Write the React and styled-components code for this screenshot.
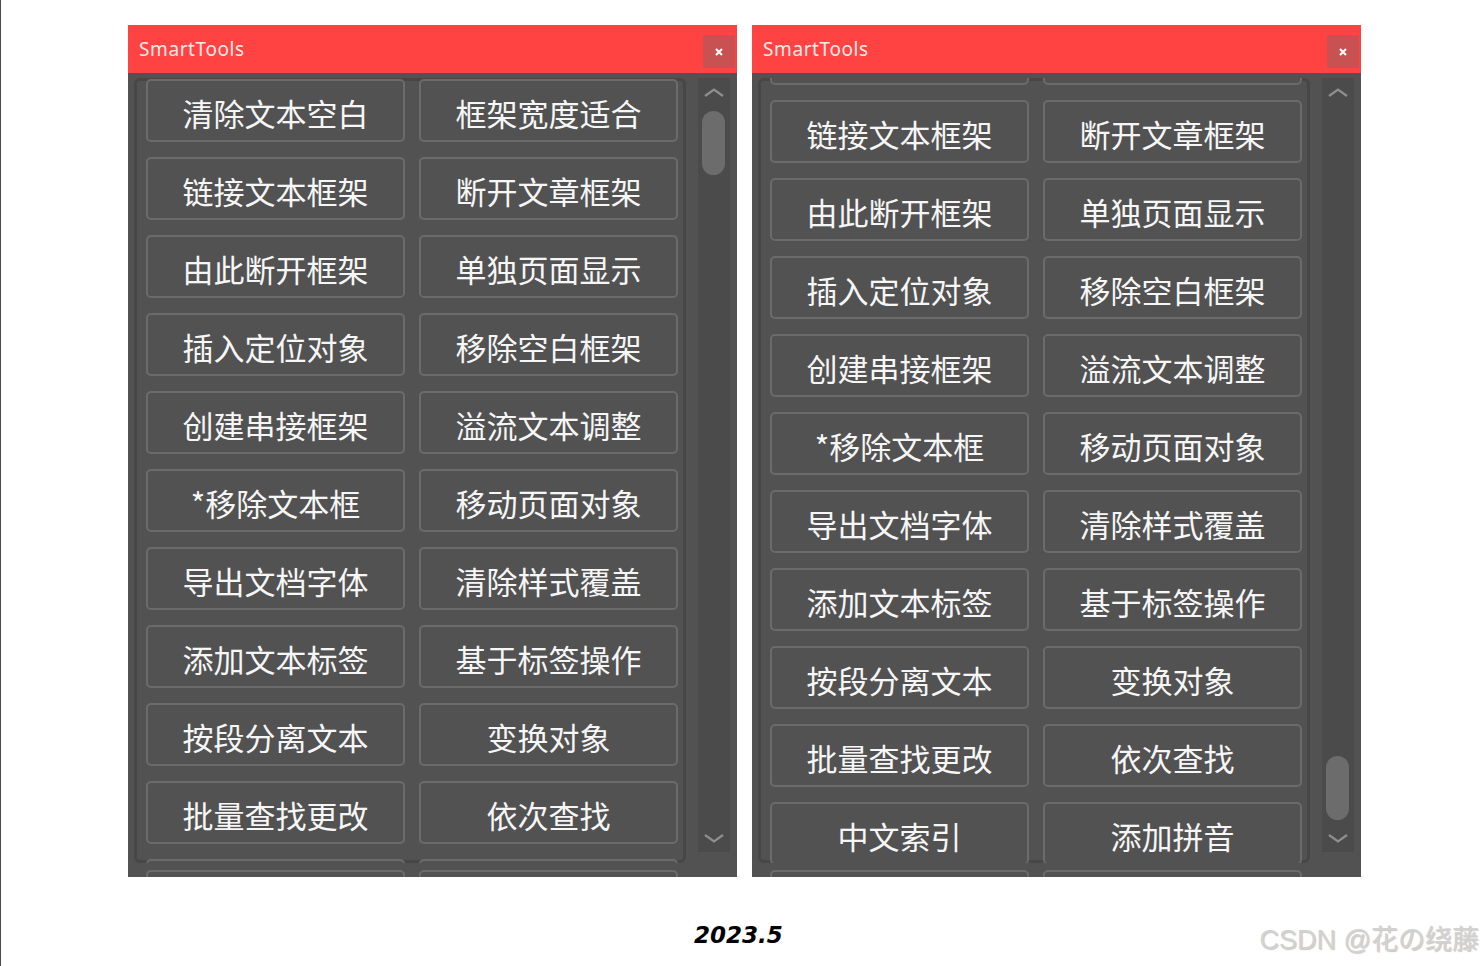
import React from 'react';
import styled, { createGlobalStyle } from 'styled-components';

const GlobalStyle = createGlobalStyle`
  html, body {
    margin: 0;
    padding: 0;
    background: #ffffff;
  }
  * {
    box-sizing: border-box;
  }
`;

const Page = styled.div`
  position: relative;
  width: 1482px;
  height: 966px;
  border-left: 1px solid #4a4a4a;
  overflow: hidden;
  font-family: 'Noto Sans', 'Noto Sans CJK SC', sans-serif;
`;

const PanelRow = styled.div`
  display: flex;
  gap: 15px;
  padding: 25px 0 0 127px;
`;

const Panel = styled.div`
  width: 609px;
  display: flex;
  flex-direction: column;
`;

const TitleBar = styled.div`
  height: 48px;
  background: #ff4343;
  display: flex;
  align-items: center;
  justify-content: space-between;
  padding-left: 11px;
`;

const Title = styled.span`
  font-family: 'Noto Sans', sans-serif;
  font-size: 19px;
  letter-spacing: 0.6px;
  color: #ffeaea;
`;

const CloseButton = styled.div`
  align-self: flex-end;
  width: 32px;
  height: 33px;
  margin: 0 2px 5px 0;
  background: #c85252;
  display: flex;
  align-items: center;
  justify-content: center;
`;

const Body = styled.div`
  height: 804px;
  background: #525252;
  overflow: hidden;
  display: flex;
  flex-direction: column;
`;

const TopArea = styled.div`
  display: flex;
  align-items: flex-start;
  gap: 12px;
  padding: 5px 0 0 6px;
`;

const Viewport = styled.div`
  width: 552px;
  height: 785px;
  border-radius: 6px;
  overflow: hidden;
  box-shadow: inset 0 0 0 3px #474747;
`;

const ButtonGrid = styled.div`
  display: grid;
  grid-template-columns: 259px 259px;
  grid-auto-rows: 63px;
  column-gap: 14px;
  row-gap: 15px;
  padding-left: ${p => p.$left}px;
  margin-top: ${p => p.$top}px;
`;

const ToolButton = styled.div`
  border: 2px solid #6b6b6b;
  border-radius: 5px;
  background: #525252;
  color: #f6f6f6;
  font-family: 'Noto Sans CJK SC', 'Noto Sans', sans-serif;
  font-size: 31px;
  display: flex;
  align-items: center;
  justify-content: center;
  padding-top: 4px;
  white-space: nowrap;
`;

const Scrollbar = styled.div`
  width: 32px;
  height: 774px;
  background: #4b4b4b;
  display: flex;
  flex-direction: column;
`;

const Arrow = styled.div`
  height: 28px;
  display: flex;
  align-items: center;
  justify-content: center;
`;

const Track = styled.div`
  flex: 1;
  padding: 0 5px 0 4px;
`;

const Thumb = styled.div`
  height: 64px;
  border-radius: 12px;
  background: #6c6c6c;
  margin-top: ${p => p.$offset}px;
`;

const DateLine = styled.div`
  margin-top: 43px;
  padding-right: 6px;
  text-align: center;
  font-family: 'DejaVu Sans', sans-serif;
  font-weight: bold;
  font-style: italic;
  font-size: 23px;
  line-height: 30px;
  color: #000000;
`;

const Watermark = styled.div`
  position: absolute;
  right: 3px;
  top: 925px;
  font-family: 'Liberation Sans', 'Noto Sans CJK SC', sans-serif;
  font-size: 27px;
  line-height: 30px;
  color: #d2d2d2;
  text-shadow: 1px 1px 1px rgba(0, 0, 0, 0.22);
  white-space: nowrap;
`;

const tools = [
  ['清除文本空白', '框架宽度适合'],
  ['链接文本框架', '断开文章框架'],
  ['由此断开框架', '单独页面显示'],
  ['插入定位对象', '移除空白框架'],
  ['创建串接框架', '溢流文本调整'],
  ['*移除文本框', '移动页面对象'],
  ['导出文档字体', '清除样式覆盖'],
  ['添加文本标签', '基于标签操作'],
  ['按段分离文本', '变换对象'],
  ['批量查找更改', '依次查找'],
  ['中文索引', '添加拼音'],
];

const Chevron = ({ up }) => (
  <svg width="20" height="9" viewBox="0 0 20 9">
    <polyline
      points={up ? '1,8 10,1.5 19,8' : '1,1 10,7.5 19,1'}
      fill="none"
      stroke="#8f8f8f"
      strokeWidth="2.2"
    />
  </svg>
);

const CloseIcon = () => (
  <svg width="8" height="8" viewBox="0 0 8 8">
    <path d="M1 1 L7 7 M7 1 L1 7" stroke="#ffffff" strokeWidth="2" />
  </svg>
);

function ToolPanel({ scroll, thumb }) {
  return (
    <Panel>
      <TitleBar>
        <Title>SmartTools</Title>
        <CloseButton>
          <CloseIcon />
        </CloseButton>
      </TitleBar>
      <Body>
        <TopArea>
          <Viewport>
            <ButtonGrid $left={12} $top={1 - scroll}>
              {tools.flat().map((label, i) => (
                <ToolButton key={i}>{label}</ToolButton>
              ))}
            </ButtonGrid>
          </Viewport>
          <Scrollbar>
            <Arrow>
              <Chevron up />
            </Arrow>
            <Track>
              <Thumb $offset={thumb} />
            </Track>
            <Arrow>
              <Chevron />
            </Arrow>
          </Scrollbar>
        </TopArea>
        <ButtonGrid $left={18} $top={7}>
          <ToolButton />
          <ToolButton />
        </ButtonGrid>
      </Body>
    </Panel>
  );
}

export default function App() {
  return (
    <>
      <GlobalStyle />
      <Page>
        <PanelRow>
          <ToolPanel scroll={0} thumb={5} />
          <ToolPanel scroll={57} thumb={650} />
        </PanelRow>
        <DateLine>2023.5</DateLine>
        <Watermark>CSDN @花の绕藤</Watermark>
      </Page>
    </>
  );
}
